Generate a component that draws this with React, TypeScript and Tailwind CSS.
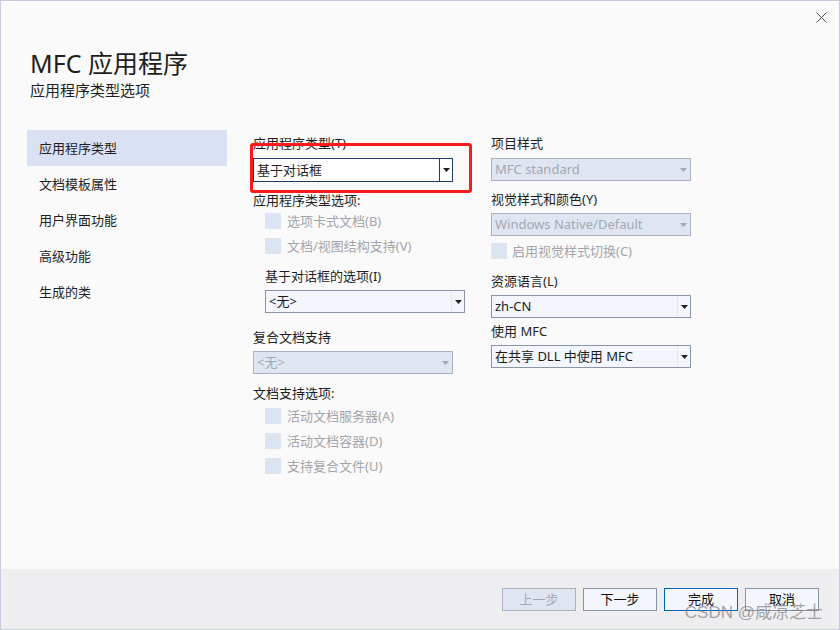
import React from "react";

const FONT = "font-['Noto_Sans','Noto_Sans_CJK_SC',sans-serif]";

type ComboKind = "normal" | "focus" | "disabled";

function Arrow({ color }: { color: string }) {
  return (
    <svg width="7" height="4" viewBox="0 0 7 4">
      <path d="M0 0 H7 L3.5 4 Z" fill={color} />
    </svg>
  );
}

function Combo({ value, kind = "normal", w = "w-[200px]", h = "h-[23px]" }: { value: string; kind?: ComboKind; w?: string; h?: string }) {
  const box =
    kind === "focus"
      ? "bg-white border-[#1d3a72] text-[#1b1b1b]"
      : kind === "disabled"
      ? "bg-[#dfe6f2] border-[#a9b2c3] text-[#a3a8b2]"
      : "bg-[#f3f6fd] border-[#8a94a7] text-[#1b1b1b]";
  const divider =
    kind === "focus" ? "border-l border-[#1d3a72]" : kind === "disabled" ? "" : "border-l border-[#e2e6ee]";
  return (
    <div className={`${w} ${h} border ${box} flex items-stretch text-[13px]`}>
      <div className="flex-1 flex items-center pl-[3px] leading-none">{value}</div>
      <div className={`w-[13px] flex items-center justify-center ${divider}`}>
        <Arrow color={kind === "disabled" ? "#a3a8b2" : "#222"} />
      </div>
    </div>
  );
}

function Label({ text, className = "" }: { text: string; className?: string }) {
  return <div className={`h-[20px] flex items-center text-[13px] text-[#1e1e1e] leading-none ${className}`}>{text}</div>;
}

function Check({ text, className = "", gap = "gap-[6px]" }: { text: string; className?: string; gap?: string }) {
  return (
    <div className={`h-[20px] flex items-center ${gap} ${className}`}>
      <div className="w-[16px] h-[16px] bg-[#dde4f1]" />
      <span className="text-[13px] text-[#a3a5aa] leading-none">{text}</span>
    </div>
  );
}

function Button({ text, kind = "normal" }: { text: string; kind?: "normal" | "disabled" | "primary" }) {
  const cls =
    kind === "disabled"
      ? "bg-[#dfe6f2] border-[#a9b2c3] text-[#a3a8b2]"
      : kind === "primary"
      ? "bg-[#f3f6fd] border-[#0067c0] border-[1.5px] text-[#111]"
      : "bg-[#f3f6fd] border-[#8a94a7] text-[#111]";
  return (
    <div className={`w-[74px] h-[23px] border ${cls} flex items-center justify-center text-[13px] leading-none`}>{text}</div>
  );
}

const navItems = ["应用程序类型", "文档模板属性", "用户界面功能", "高级功能", "生成的类"];

export default function App() {
  return (
    <div className={`w-[840px] h-[630px] border border-[#c8cbdc] bg-[#fafafa] flex flex-col relative ${FONT}`}>
      <div className="h-[32px] flex justify-end items-center pr-[12px]">
        <svg width="11" height="11" viewBox="0 0 11 11">
          <path d="M0.5 0.5 L10.5 10.5 M10.5 0.5 L0.5 10.5" stroke="#555" strokeWidth="1" />
        </svg>
      </div>

      <div className="pl-[29px] mt-[14px]">
        <div className="h-[32px] flex items-center text-[25px] text-[#1e1e1e] leading-none">MFC 应用程序</div>
        <div className="h-[20px] flex items-center text-[15px] text-[#1e1e1e] leading-none mt-[1px]">应用程序类型选项</div>
      </div>

      <div className="flex pl-[26px] mt-[30px]">
        <div className="w-[200px] flex flex-col">
          {navItems.map((item, i) => (
            <div
              key={item}
              className={`h-[36px] flex items-center pl-[12px] text-[13px] text-[#1e1e1e] leading-none ${i === 0 ? "bg-[#dae1f5]" : ""}`}
            >
              {item}
            </div>
          ))}
        </div>

        <div className="w-[212px] ml-[26px] flex flex-col pt-[3px]">
          <div className="relative">
            <Label text="应用程序类型(T)" />
            <div className="mt-[5px]">
              <Combo value="基于对话框" kind="focus" h="h-[24px]" />
            </div>
            <div className="absolute left-[-3px] top-[10px] w-[222px] h-[50px] border-[3px] border-[#ff1a1a] rounded-[3px]" />
          </div>
          <Label text="应用程序类型选项:" className="mt-[8px]" />
          <Check text="选项卡式文档(B)" className="mt-[1px] pl-[12px]" />
          <Check text="文档/视图结构支持(V)" className="mt-[5px] pl-[12px]" />
          <Label text="基于对话框的选项(I)" className="mt-[10px] pl-[12px]" />
          <div className="mt-[4px] pl-[12px]">
            <Combo value="<无>" />
          </div>
          <Label text="复合文档支持" className="mt-[14px]" />
          <div className="mt-[4px]">
            <Combo value="<无>" kind="disabled" />
          </div>
          <Label text="文档支持选项:" className="mt-[9px]" />
          <Check text="活动文档服务器(A)" className="mt-[3px] pl-[12px]" />
          <Check text="活动文档容器(D)" className="mt-[5px] pl-[12px]" />
          <Check text="支持复合文件(U)" className="mt-[5px] pl-[12px]" />
        </div>

        <div className="w-[200px] ml-[26px] flex flex-col pt-[3px]">
          <Label text="项目样式" />
          <div className="mt-[5px]">
            <Combo value="MFC standard" kind="disabled" />
          </div>
          <Label text="视觉样式和颜色(Y)" className="mt-[8px]" />
          <div className="mt-[4px]">
            <Combo value="Windows Native/Default" kind="disabled" />
          </div>
          <Check text="启用视觉样式切换(C)" className="mt-[5px]" gap="gap-[5px]" />
          <Label text="资源语言(L)" className="mt-[10px]" />
          <div className="mt-[4px]">
            <Combo value="zh-CN" />
          </div>
          <Label text="使用 MFC" className="mt-[3px]" />
          <div className="mt-[4px]">
            <Combo value="在共享 DLL 中使用 MFC" />
          </div>
        </div>
      </div>

      <div className="mt-auto h-[60px] bg-[#eeeef1] flex items-center justify-end pr-[20px] gap-[7px]">
        <Button text="上一步" kind="disabled" />
        <Button text="下一步" />
        <Button text="完成" kind="primary" />
        <Button text="取消" />
      </div>

      <div className="absolute right-[16px] bottom-[8px] text-[17px] text-[#808080]/70 leading-none pointer-events-none font-['Liberation_Sans','Noto_Sans_CJK_SC',sans-serif]">
        CSDN @咸凉芝士
      </div>
    </div>
  );
}
